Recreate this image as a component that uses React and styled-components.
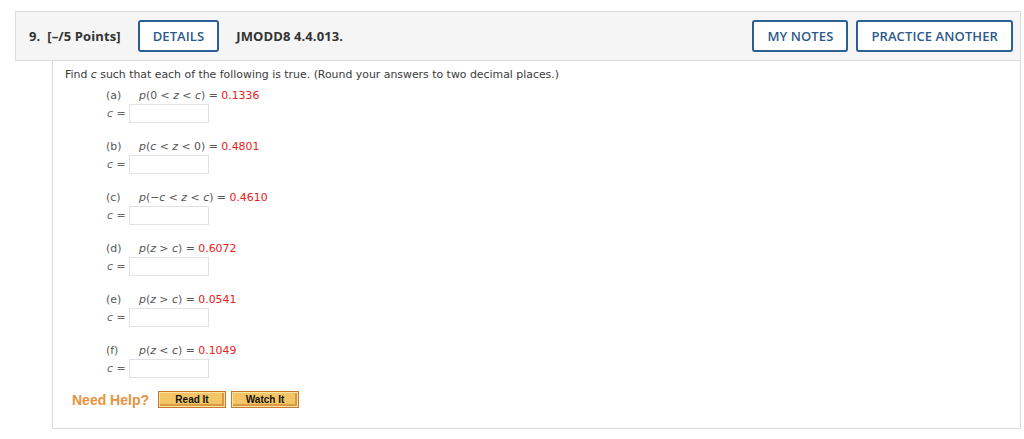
import styled, { createGlobalStyle } from "styled-components";

const GlobalStyle = createGlobalStyle`
  body {
    margin: 0;
    background: #ffffff;
    font-family: "Open Sans", "Liberation Sans", sans-serif;
  }
`;

const parts = [
  { key: "a", expr: ["p", "(0 < ", "z", " < ", "c", ")"], value: "0.1336" },
  { key: "b", expr: ["p", "(", "c", " < ", "z", " < 0)"], value: "0.4801" },
  { key: "c", expr: ["p", "(\u2212", "c", " < ", "z", " < ", "c", ")"], value: "0.4610" },
  { key: "d", expr: ["p", "(", "z", " > ", "c", ")"], value: "0.6072" },
  { key: "e", expr: ["p", "(", "z", " > ", "c", ")"], value: "0.0541" },
  { key: "f", expr: ["p", "(", "z", " < ", "c", ")"], value: "0.1049" },
];

// letters in the expression are italic, the rest upright
const italic = ["p", "z", "c"];

export default function App() {
  return (
    <>
      <GlobalStyle />
      <Page>
        <Header>
          <QNumber>9.</QNumber>
          <Points>[&ndash;/5 Points]</Points>
          <OutlineButton>DETAILS</OutlineButton>
          <Source>JMODD8 4.4.013.</Source>
          <HeaderRight>
            <OutlineButton>MY NOTES</OutlineButton>
            <OutlineButton>PRACTICE ANOTHER</OutlineButton>
          </HeaderRight>
        </Header>
        <Body>
          <Prompt>
            Find <i>c</i> such that each of the following is true. (Round your
            answers to two decimal places.)
          </Prompt>
          {parts.map((part) => (
            <Part key={part.key}>
              <PartLine>
                <PartLabel>({part.key})</PartLabel>
                <span>
                  {part.expr.map((bit, i) =>
                    italic.includes(bit) ? <i key={i}>{bit}</i> : <span key={i}>{bit}</span>
                  )}
                  {" = "}
                  <Value>{part.value}</Value>
                </span>
              </PartLine>
              <AnswerRow>
                <AnswerLabel>
                  <i>c</i> =
                </AnswerLabel>
                <AnswerInput type="text" />
              </AnswerRow>
            </Part>
          ))}
          <HelpRow>
            <HelpText>Need Help?</HelpText>
            <HelpButton>Read It</HelpButton>
            <HelpButton>Watch It</HelpButton>
          </HelpRow>
        </Body>
      </Page>
    </>
  );
}

const Page = styled.div`
  width: 1006px;
  padding: 11px 0 0 15px;
`;

const Header = styled.div`
  display: flex;
  align-items: center;
  box-sizing: border-box;
  height: 50px;
  padding: 0 7px 0 13px;
  background-color: #f5f5f5;
  border: 1px solid #dcdcdc;
  font-size: 13px;
  font-weight: 700;
  color: #333;
  letter-spacing: 0.1px;
`;

const QNumber = styled.span`
  margin-right: 7px;
`;

const Points = styled.span`
  margin-right: 17px;
`;

const Source = styled.span`
  margin-left: 17px;
`;

const HeaderRight = styled.div`
  display: flex;
  gap: 8px;
  margin-left: auto;
`;

const OutlineButton = styled.button`
  box-sizing: border-box;
  height: 32px;
  padding: 0 13px;
  background: #fff;
  border: 2px solid #2b5f94;
  border-radius: 3px;
  font-family: "Open Sans", "Liberation Sans", sans-serif;
  font-size: 13px;
  font-weight: 600;
  color: #2b5a8a;
  letter-spacing: 0.1px;
`;

const Body = styled.div`
  box-sizing: border-box;
  margin-left: 37px;
  height: 368px;
  padding: 6px 12px 0;
  border: 1px solid #dcdcdc;
  border-top: none;
  font-family: "DejaVu Sans", Verdana, sans-serif;
  font-size: 10.9px;
  color: #3a3a3a;
  line-height: 16px;
`;

const Prompt = styled.div`
  margin-bottom: 5px;
`;

const Part = styled.div`
  margin-left: 41px;
  margin-bottom: 16px;
`;

const PartLine = styled.div`
  display: flex;
  height: 16px;
  color: #555;
`;

const PartLabel = styled.span`
  width: 33px;
`;

const Value = styled.span`
  color: #e8201a;
`;

const AnswerRow = styled.div`
  display: flex;
  align-items: center;
  height: 19px;
  color: #666;
`;

const AnswerLabel = styled.span`
  width: 23px;
  padding-left: 1px;
  box-sizing: border-box;
`;

const AnswerInput = styled.input`
  box-sizing: border-box;
  width: 80px;
  height: 19px;
  margin: 0;
  border: 1px solid #e2e2e2;
  background: #fff;
`;

const HelpRow = styled.div`
  display: flex;
  align-items: center;
  gap: 5px;
  margin: -3px 0 0 7px;
`;

const HelpText = styled.span`
  margin-right: 4px;
  font-family: "Liberation Sans", Arial, sans-serif;
  font-size: 14px;
  font-weight: 700;
  color: #e8923c;
`;

const HelpButton = styled.button`
  box-sizing: border-box;
  width: 68px;
  height: 17px;
  padding: 0;
  background: #f3c564;
  border: 1px solid #c8782a;
  box-shadow: inset 0 0 0 1px #fbe3a6, inset -1px -1px 0 2px #d99a44;
  font-family: "Liberation Sans", Arial, sans-serif;
  font-size: 10px;
  font-weight: 700;
  color: #111;
`;
